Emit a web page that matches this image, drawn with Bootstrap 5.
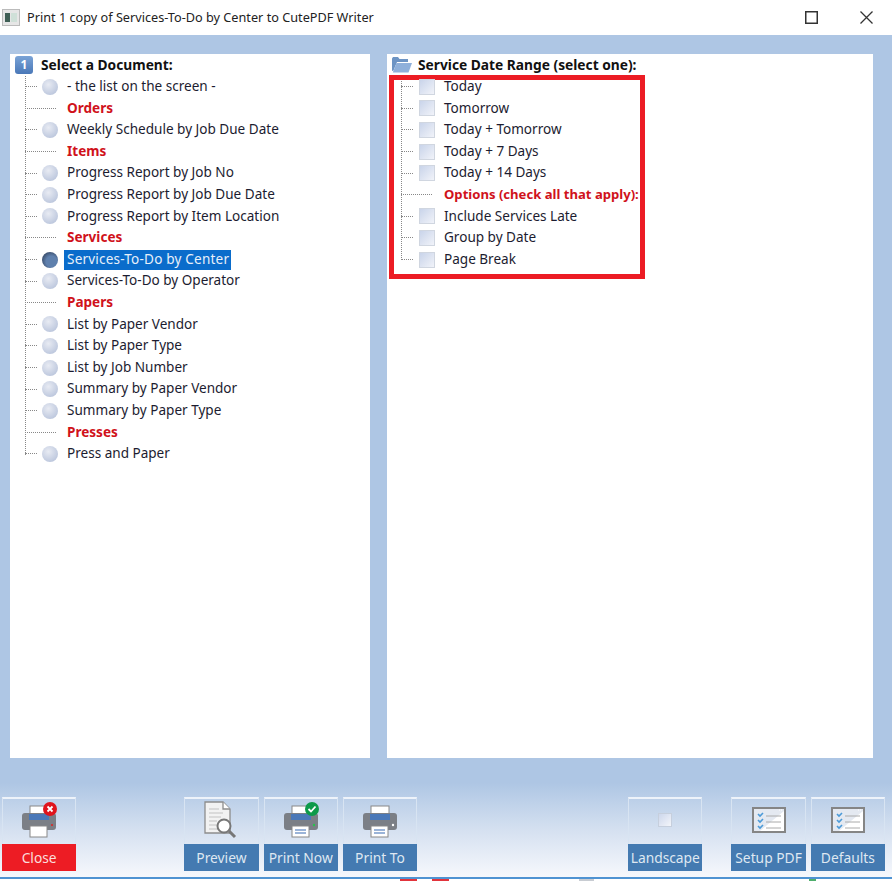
<!DOCTYPE html>
<html lang="en">
<head>
<meta charset="utf-8">
<title>Print</title>
<link href="https://cdn.jsdelivr.net/npm/bootstrap@5.3.0/dist/css/bootstrap.min.css" rel="stylesheet">
<style>
html,body{margin:0;height:882px;overflow:hidden;background:#fff}
body{font-family:"Noto Sans","DejaVu Sans",sans-serif;font-size:13.55px;color:#1c1c30;line-height:1}
.win{width:892px;height:882px}
.titlebar{height:35px;padding-left:2px;background:#fff}
.titlebar .ttl{margin-left:7px;font-size:12.7px;color:#222}
.ctl{height:35px}
.ctl-max{width:58px}
.ctl-x{width:52px}
.stage{height:735px;background:#aec6e4;padding:19px 19px 0 10px;gap:17px}
.pane{background:#fff;height:704px;padding-top:1px}
.pane-l{width:360px}
.pane-r{width:486px}
.hd{height:19px;font-weight:700;color:#111;font-size:13.75px}
.pane-l .hd{padding-left:5px;gap:8px}
.pane-r .hd{padding-left:5px;gap:6px}
.numbadge{width:18px;height:18px;border-radius:3px;background:linear-gradient(#7aa3d6,#4a78b8);color:#fff;font-size:12px;font-weight:700}
.tree{margin-top:2px;position:relative;padding:0}
.pane-l .tree{margin-left:15px;width:340px}
.pane-r .tree{margin-left:14px;width:300px}
.rw{height:21.6px;position:relative}
.rw::before{content:"";border-top:1px dotted #888;width:12px;flex:none}
.rw.hdr::before{width:31px}
.tree::before{content:"";position:absolute;left:0;top:0;bottom:10px;border-left:1px dotted #888}
.radio{width:16px;height:16px;border-radius:50%;flex:none;margin:0 7px 0 5px;background:radial-gradient(circle at 40% 35%,#e8ebf3,#c0cadf 70%,#a9b5cf);}
.radio.on{background:radial-gradient(circle at 60% 60%,#5f80ad 40%,#3c4f6e 75%,#22262e)}
.chk{width:16px;height:16px;flex:none;margin:0 7px 0 6px;border:1px solid #d0d6e0;background:linear-gradient(135deg,#c9d4ea,#f1f3f9)}
.lbl{white-space:nowrap;padding:0 2px}
.lbl.sel{background:#0a6ccb;color:#e8f0fa;height:20px;display:flex;align-items:center;width:167px;margin-left:-1px;padding-left:3px;letter-spacing:.2px}
.grp{color:#d0121b;font-weight:700;padding-left:11px}
.pane-r .grp{padding-left:12px;font-size:13.1px;white-space:nowrap}
.redbox{position:absolute;left:-12px;top:-1px;width:256px;height:204px;border:5px solid #ec1c24;pointer-events:none}
.foot{height:109px;background:linear-gradient(#aec6e4 0,#aec6e4 12%,#d4e0f0 55%,#f6f8fc 100%);padding:27px 7px 0 2px;border-bottom:2px solid #4f93d2}
.act{width:74.5px;margin:0}
.tile{height:47px;border:1px solid #d8e4f2;border-top:2px solid #eef3fa;border-bottom:0;border-radius:0;padding:0 0 3px}
.cap{height:27px;background:#447ab1;color:#dfe8f2;font-size:13.8px;display:flex;align-items:center;justify-content:center}
.cap.stop{background:#ed1c24;color:#fbdcdc}
.mini{width:14px;height:14px;border:1px solid #c6cfdd;background:linear-gradient(135deg,#cdd7ec,#f3f5fa)}
.gap1{margin-left:108px}
.gap2{margin-left:5px}
.gap3{margin-left:211px}
.gap4{margin-left:29px}
.under{height:2px;background:#fff}
.bit{height:2px;flex:none}
.b1{margin-left:400px;width:17px;background:#e2343c}
.b2{margin-left:15px;width:17px;background:#e2343c}
.b3{margin-left:130px;width:15px;background:#c8ccd2}
.b4{margin-left:215px;width:7px;background:#4fae6c}
</style>
</head>
<body>
<div class="win d-flex flex-column">
  <div class="titlebar d-flex align-items-center">
    <svg width="18" height="17" viewBox="0 0 18 17"><rect x=".5" y=".5" width="17" height="16" fill="#e6e6e6" stroke="#bbb"/><rect x="3" y="4" width="5" height="9" fill="#3f5f55"/><rect x="9" y="4" width="6" height="9" fill="#cfe0d8"/></svg>
    <span class="ttl">Print 1 copy of Services-To-Do by Center to CutePDF Writer</span>
    <div class="ms-auto d-flex">
      <div class="ctl ctl-max d-flex align-items-center justify-content-center"><svg width="13" height="13" viewBox="0 0 13 13"><rect x=".75" y=".75" width="11.5" height="11.5" fill="none" stroke="#333" stroke-width="1.5"/></svg></div>
      <div class="ctl ctl-x d-flex align-items-center justify-content-center"><svg width="13" height="13" viewBox="0 0 13 13"><path d="M.5.5l12 12M12.5.5l-12 12" stroke="#333" stroke-width="1.3"/></svg></div>
    </div>
  </div>
  <div class="stage d-flex">
    <div class="pane pane-l">
      <div class="hd d-flex align-items-center"><span class="numbadge d-flex align-items-center justify-content-center">1</span>Select a Document:</div>
      <div class="tree">
        <div class="rw d-flex align-items-center"><span class="radio"></span><span class="lbl">- the list on the screen -</span></div>
        <div class="rw hdr d-flex align-items-center"><span class="grp">Orders</span></div>
        <div class="rw d-flex align-items-center"><span class="radio"></span><span class="lbl">Weekly Schedule by Job Due Date</span></div>
        <div class="rw hdr d-flex align-items-center"><span class="grp">Items</span></div>
        <div class="rw d-flex align-items-center"><span class="radio"></span><span class="lbl">Progress Report by Job No</span></div>
        <div class="rw d-flex align-items-center"><span class="radio"></span><span class="lbl">Progress Report by Job Due Date</span></div>
        <div class="rw d-flex align-items-center"><span class="radio"></span><span class="lbl">Progress Report by Item Location</span></div>
        <div class="rw hdr d-flex align-items-center"><span class="grp">Services</span></div>
        <div class="rw d-flex align-items-center"><span class="radio on"></span><span class="lbl sel">Services-To-Do by Center</span></div>
        <div class="rw d-flex align-items-center"><span class="radio"></span><span class="lbl">Services-To-Do by Operator</span></div>
        <div class="rw hdr d-flex align-items-center"><span class="grp">Papers</span></div>
        <div class="rw d-flex align-items-center"><span class="radio"></span><span class="lbl">List by Paper Vendor</span></div>
        <div class="rw d-flex align-items-center"><span class="radio"></span><span class="lbl">List by Paper Type</span></div>
        <div class="rw d-flex align-items-center"><span class="radio"></span><span class="lbl">List by Job Number</span></div>
        <div class="rw d-flex align-items-center"><span class="radio"></span><span class="lbl">Summary by Paper Vendor</span></div>
        <div class="rw d-flex align-items-center"><span class="radio"></span><span class="lbl">Summary by Paper Type</span></div>
        <div class="rw hdr d-flex align-items-center"><span class="grp">Presses</span></div>
        <div class="rw d-flex align-items-center"><span class="radio"></span><span class="lbl">Press and Paper</span></div>
      </div>
    </div>
    <div class="pane pane-r">
      <div class="hd d-flex align-items-center">
        <svg width="20" height="17" viewBox="0 0 20 17"><path d="M0 2.5 1 1h5l1.5 2H16v3H5L1.5 14.5 0 15z" fill="#6d94c4"/><path d="M4.5 7H20l-3.5 9.5H.8z" fill="#8fb0da"/></svg>
        Service Date Range (select one):
      </div>
      <div class="tree">
        <div class="redbox"></div>
        <div class="rw d-flex align-items-center"><span class="chk"></span><span class="lbl">Today</span></div>
        <div class="rw d-flex align-items-center"><span class="chk"></span><span class="lbl">Tomorrow</span></div>
        <div class="rw d-flex align-items-center"><span class="chk"></span><span class="lbl">Today + Tomorrow</span></div>
        <div class="rw d-flex align-items-center"><span class="chk"></span><span class="lbl">Today + 7 Days</span></div>
        <div class="rw d-flex align-items-center"><span class="chk"></span><span class="lbl">Today + 14 Days</span></div>
        <div class="rw hdr d-flex align-items-center"><span class="grp">Options (check all that apply):</span></div>
        <div class="rw d-flex align-items-center"><span class="chk"></span><span class="lbl">Include Services Late</span></div>
        <div class="rw d-flex align-items-center"><span class="chk"></span><span class="lbl">Group by Date</span></div>
        <div class="rw d-flex align-items-center"><span class="chk"></span><span class="lbl">Page Break</span></div>
      </div>
    </div>
  </div>
  <div class="foot d-flex">
    <div class="act">
      <div class="tile d-flex align-items-center justify-content-center">
        <svg width="36" height="36" viewBox="0 0 36 36"><rect x="9" y="4" width="18" height="10" fill="#fff" stroke="#888"/><rect x="1" y="11" width="34" height="17" rx="3" fill="#7b7f86"/><rect x="8" y="12" width="20" height="6" fill="#4a78b8"/><rect x="9" y="24" width="17" height="11" fill="#fff" stroke="#888"/><circle cx="31" cy="23" r="1" fill="#e02020"/><circle cx="29" cy="7" r="7" fill="#e0141c"/><path d="M26.5 4.5l5 5M31.5 4.5l-5 5" stroke="#fff" stroke-width="1.8"/></svg>
      </div>
      <div class="cap stop">Close</div>
    </div>
    <div class="act gap1">
      <div class="tile d-flex align-items-center justify-content-center">
        <svg width="36" height="38" viewBox="0 0 36 38"><path d="M2 1h18l7 7v24H2z" fill="#f2f2f2" stroke="#8d8d8d" stroke-width="1.3"/><path d="M20 1v7h7" fill="#fff" stroke="#8d8d8d" stroke-width="1.3"/><path d="M6 8h10M6 12h14M6 16h12M6 20h8M6 24h8M6 28h10" stroke="#c2c2c2"/><circle cx="21" cy="25" r="6.5" fill="#fff" stroke="#777" stroke-width="2"/><path d="M26 30l6 6" stroke="#777" stroke-width="3"/></svg>
      </div>
      <div class="cap">Preview</div>
    </div>
    <div class="act gap2">
      <div class="tile d-flex align-items-center justify-content-center">
        <svg width="36" height="36" viewBox="0 0 36 36"><rect x="9" y="4" width="18" height="10" fill="#fff" stroke="#888"/><rect x="1" y="11" width="34" height="17" rx="3" fill="#7b7f86"/><rect x="8" y="12" width="20" height="6" fill="#4a78b8"/><rect x="9" y="24" width="17" height="11" fill="#fff" stroke="#888"/><path d="M12 28h11M12 31h11" stroke="#7b9ccb" stroke-width="1.4"/><circle cx="31" cy="23" r="1.2" fill="#27c24c"/><circle cx="29" cy="7" r="7" fill="#0d9a4a"/><path d="M25.5 7l2.5 2.5 4.5-5" fill="none" stroke="#fff" stroke-width="1.8"/></svg>
      </div>
      <div class="cap">Print Now</div>
    </div>
    <div class="act gap2">
      <div class="tile d-flex align-items-center justify-content-center">
        <svg width="36" height="36" viewBox="0 0 36 36"><rect x="9" y="4" width="18" height="10" fill="#fff" stroke="#888"/><rect x="1" y="11" width="34" height="17" rx="3" fill="#7b7f86"/><rect x="8" y="12" width="20" height="6" fill="#4a78b8"/><rect x="9" y="24" width="17" height="11" fill="#fff" stroke="#888"/><path d="M12 28h11M12 31h11" stroke="#7b9ccb" stroke-width="1.4"/><circle cx="31" cy="23" r="1.2" fill="#fff"/></svg>
      </div>
      <div class="cap">Print To</div>
    </div>
    <div class="act gap3">
      <div class="tile d-flex align-items-center justify-content-center"><span class="mini"></span></div>
      <div class="cap">Landscape</div>
    </div>
    <div class="act gap4">
      <div class="tile d-flex align-items-center justify-content-center">
        <svg width="34" height="26" viewBox="0 0 34 26"><rect x="1" y="1" width="32" height="24" fill="#e4e9f1" stroke="#858585" stroke-width="2"/><path d="M8 24 32 4v20z" fill="#fff"/><path d="M14 9h15M14 15h15M14 21h15" stroke="#aaa"/><path d="M6 7l2 2 3-3M6 13l2 2 3-3M6 19l2 2 3-3" fill="none" stroke="#4b9ad8" stroke-width="1.6"/><path d="M27 3h4" stroke="#fff" stroke-dasharray="1 1"/></svg>
      </div>
      <div class="cap">Setup PDF</div>
    </div>
    <div class="act gap2">
      <div class="tile d-flex align-items-center justify-content-center">
        <svg width="34" height="26" viewBox="0 0 34 26"><rect x="1" y="1" width="32" height="24" fill="#e4e9f1" stroke="#858585" stroke-width="2"/><path d="M8 24 32 4v20z" fill="#fff"/><path d="M14 9h15M14 15h15M14 21h15" stroke="#aaa"/><path d="M6 7l2 2 3-3M6 13l2 2 3-3M6 19l2 2 3-3" fill="none" stroke="#4b9ad8" stroke-width="1.6"/><path d="M27 3h4" stroke="#fff" stroke-dasharray="1 1"/></svg>
      </div>
      <div class="cap">Defaults</div>
    </div>
  </div>
  <div class="under d-flex"><span class="bit b1"></span><span class="bit b2"></span><span class="bit b3"></span><span class="bit b4"></span></div>
</div>
<script src="https://cdn.jsdelivr.net/npm/bootstrap@5.3.0/dist/js/bootstrap.bundle.min.js"></script>
</body>
</html>
